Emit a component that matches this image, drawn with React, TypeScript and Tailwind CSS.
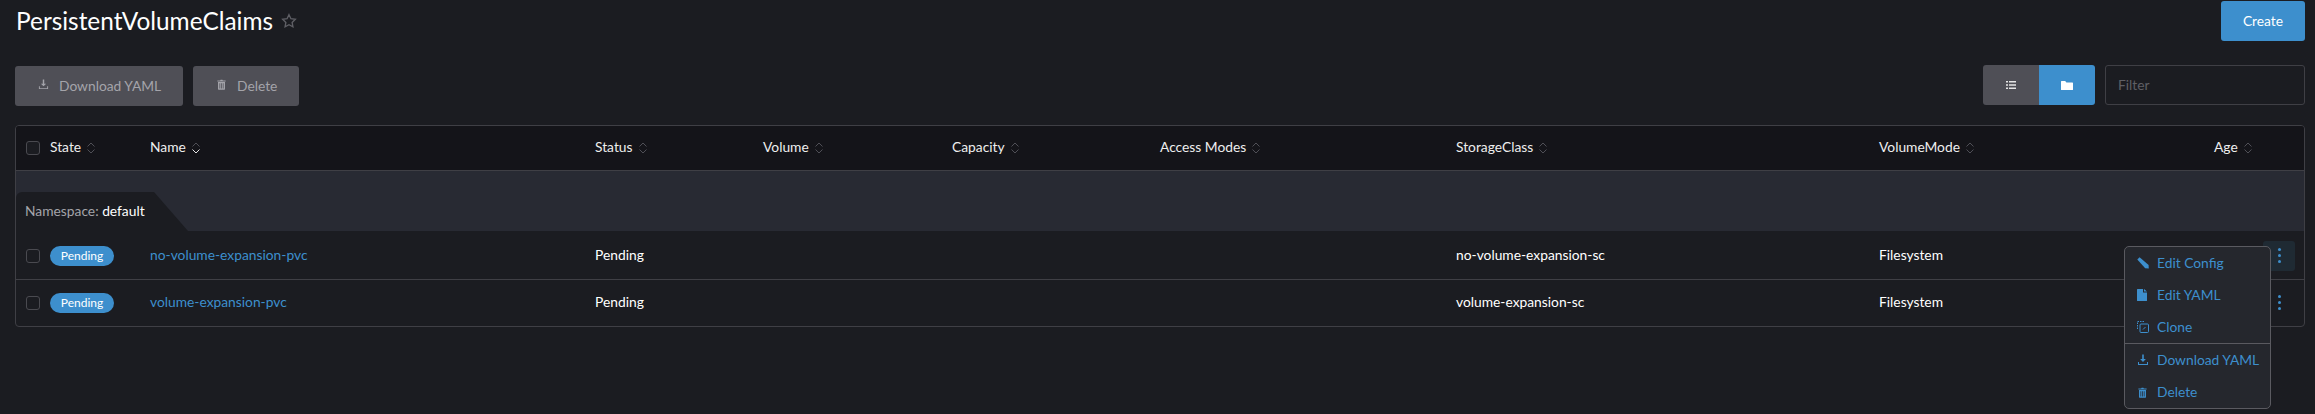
import React from 'react';

const columns = [
  { label: 'State', width: 'w-[100px]' },
  { label: 'Name', width: 'w-[445px]', active: true },
  { label: 'Status', width: 'w-[168px]' },
  { label: 'Volume', width: 'w-[189px]' },
  { label: 'Capacity', width: 'w-[208px]' },
  { label: 'Access Modes', width: 'w-[296px]' },
  { label: 'StorageClass', width: 'w-[423px]' },
  { label: 'VolumeMode', width: 'w-[335px]' },
  { label: 'Age', width: '' },
];

const rows = [
  { name: 'no-volume-expansion-pvc', sc: 'no-volume-expansion-sc', open: true },
  { name: 'volume-expansion-pvc', sc: 'volume-expansion-sc', open: false },
];

const SortIcon = ({ active }: { active?: boolean }) => (
  <svg viewBox="0 0 8 12" className="ml-[6px] h-[12px] w-[8px]" fill="none" strokeWidth="1">
    <path d="M0.5 4.5 L4 1 L7.5 4.5" stroke="#4f4f56" />
    <path d="M0.5 7.5 L4 11 L7.5 7.5" stroke={active ? '#e6e6e6' : '#4f4f56'} />
  </svg>
);

const DownloadIcon = ({ className }: { className: string }) => (
  <svg viewBox="0 0 12 12" className={className} fill="currentColor">
    <path d="M5.2 0.5h1.6v4.6h2.1L6 8 3.1 5.1h2.1z" />
    <path d="M1 8h1v2h8V8h1v3H1z" />
  </svg>
);

const TrashIcon = ({ className }: { className: string }) => (
  <svg viewBox="0 0 12 12" className={className} fill="currentColor">
    <path d="M1.5 1.6h3L5 0.8h2l0.5 0.8h3v1.2h-9z" />
    <path d="M2.2 3.4h7.6V11a0.6 0.6 0 0 1-0.6 0.6H2.8a0.6 0.6 0 0 1-0.6-0.6z M3.8 4.6v5.8h0.8V4.6z M5.6 4.6v5.8h0.8V4.6z M7.4 4.6v5.8h0.8V4.6z" fillRule="evenodd" />
  </svg>
);

const Checkbox = () => (
  <span className="block h-[14px] w-[14px] rounded-[3px] border border-[#4a4a50] bg-[#1b1c21]" />
);

const Kebab = ({ open }: { open: boolean }) => (
  <span className={`flex h-[30px] w-[32px] flex-col items-center justify-center gap-[3px] rounded-[3px] ${open ? 'bg-[#1f2a33]' : ''}`}>
    <i className="h-[3px] w-[3px] rounded-full bg-[#3d8fcd]" />
    <i className="h-[3px] w-[3px] rounded-full bg-[#3d8fcd]" />
    <i className="h-[3px] w-[3px] rounded-full bg-[#3d8fcd]" />
  </span>
);

const MenuItem = ({ icon, label }: { icon: React.ReactNode; label: string }) => (
  <div className="flex h-[32px] items-center pl-[12px] text-[#3d8fcd]">
    <span className="flex w-[20px] items-center">{icon}</span>
    {label}
  </div>
);

const App: React.FC = () => {
  return (
    <div className="relative h-[414px] w-[2315px] overflow-hidden bg-[#1b1c21] pl-[15px] pr-[10px] pt-px font-['Lato',sans-serif] text-[13.8px] text-[#e6e6e6]">
      <div className="flex h-[40px] items-center justify-between">
        <div className="flex items-center text-[24.4px] text-white">
          <span className="pl-px">PersistentVolumeClaims</span>
          <svg viewBox="0 0 24 24" className="ml-[8px] h-[16px] w-[16px]" fill="none" stroke="#5f5f65" strokeWidth="2">
            <path d="M12 2.5l2.9 6.1 6.6.9-4.8 4.6 1.2 6.6-5.9-3.2-5.9 3.2 1.2-6.6-4.8-4.6 6.6-.9z" />
          </svg>
        </div>
        <button className="h-[40px] w-[84px] rounded-[3px] bg-[#3d8fcd] text-white">Create</button>
      </div>

      <div className="mt-[24px] flex items-start justify-between">
        <div className="mt-px flex gap-[10px] text-[#a4a4aa]">
          <button className="flex h-[40px] w-[168px] items-center rounded-[3px] bg-[#4f4f56] pl-[23px]">
            <DownloadIcon className="mb-[3px] mr-[10px] h-[11px] w-[11px]" />
            Download YAML
          </button>
          <button className="flex h-[40px] w-[106px] items-center rounded-[3px] bg-[#4f4f56] pl-[23px]">
            <TrashIcon className="mb-[3px] mr-[10px] h-[11px] w-[11px]" />
            Delete
          </button>
        </div>
        <div className="flex items-center gap-[10px]">
          <div className="flex h-[40px] overflow-hidden rounded-[3px]">
            <span className="flex w-[56px] items-center justify-center bg-[#4f4f56]">
              <svg viewBox="0 0 10 8" className="h-[8px] w-[10px]" fill="#e6e6e6">
                <path d="M0 0h2v1.6H0zM3 0h7v1.6H3zM0 3.2h2v1.6H0zM3 3.2h7v1.6H3zM0 6.4h2V8H0zM3 6.4h7V8H3z" />
              </svg>
            </span>
            <span className="flex w-[56px] items-center justify-center bg-[#3d8fcd]">
              <svg viewBox="0 0 12 9" className="h-[9px] w-[12px]" fill="#ffffff">
                <path d="M0 0.6A0.6 0.6 0 0 1 0.6 0h3.6l1.2 1.4H11.4A0.6 0.6 0 0 1 12 2v6.4a0.6 0.6 0 0 1-0.6 0.6H0.6A0.6 0.6 0 0 1 0 8.4z" />
              </svg>
            </span>
          </div>
          <div className="flex h-[40px] w-[200px] items-center rounded-[3px] border border-[#3f3f45] pl-[12px] text-[#5f5f65]">Filter</div>
        </div>
      </div>

      <div className="mt-[19px] overflow-hidden rounded-[4px] border border-[#3f3f45]">
        <table className="w-full table-fixed border-collapse">
          <colgroup>
            <col className="w-[34px]" />
            {columns.map((c) => (
              <col key={c.label} className={c.width} />
            ))}
          </colgroup>
          <thead>
            <tr className="h-[44px] border-b border-[#3f3f45] bg-[#141419]">
              <th className="pl-[10px] text-left"><Checkbox /></th>
              {columns.map((c) => (
                <th key={c.label} className="p-0 text-left font-normal text-[#eeeeee]">
                  <span className="flex items-center">
                    {c.label}
                    <SortIcon active={c.active} />
                  </span>
                </th>
              ))}
            </tr>
          </thead>
          <tbody>
            <tr className="h-[61px] bg-[#282a33]">
              <td colSpan={10} className="p-0 align-bottom">
                <div className="flex h-[39px] w-[172px] items-center rounded-tl-[6px] bg-[#1b1c21] pl-[9px] [clip-path:polygon(0_0,138px_0,172px_100%,0_100%)]">
                  <span className="text-[#a4a4aa]">Namespace:&nbsp;</span>
                  <span className="text-white">default</span>
                </div>
              </td>
            </tr>
            {rows.map((r) => (
              <tr
                key={r.name}
                className={r.open ? 'h-[48px] border-b border-[#3f3f45] [&>td]:pt-[2px]' : 'h-[47px]'}
              >
                <td className="pl-[10px]"><Checkbox /></td>
                <td className="p-0">
                  <span className="flex h-[20px] w-[64px] items-center justify-center rounded-full bg-[#3d8fcd] text-[12px] text-white">Pending</span>
                </td>
                <td className="p-0 text-[#3d8fcd]">{r.name}</td>
                <td className="p-0 text-white">Pending</td>
                <td className="p-0" />
                <td className="p-0" />
                <td className="p-0" />
                <td className="p-0 text-white">{r.sc}</td>
                <td className="p-0 text-white">Filesystem</td>
                <td className="p-0">
                  <div className="flex justify-end pr-[9px]"><Kebab open={r.open} /></div>
                </td>
              </tr>
            ))}
          </tbody>
        </table>
      </div>

      <div className="absolute left-[2124px] top-[246px] w-[147px] rounded-[5px] border border-[#5a5a60] bg-[#25272d]">
        <MenuItem
          label="Edit Config"
          icon={
            <svg viewBox="0 0 12 12" className="h-[12px] w-[12px]" fill="currentColor">
              <path d="M0.3 2.6L2.6 0.3l9 7.6 0.2 3.7-3.6-.3z" />
            </svg>
          }
        />
        <MenuItem
          label="Edit YAML"
          icon={
            <svg viewBox="0 0 10 12" className="h-[12px] w-[10px]" fill="currentColor">
              <path d="M0 0.6A0.6 0.6 0 0 1 0.6 0H6v3.4h4v8a0.6 0.6 0 0 1-0.6 0.6H0.6A0.6 0.6 0 0 1 0 11.4zM7 0l3 2.5H7z" />
            </svg>
          }
        />
        <MenuItem
          label="Clone"
          icon={
            <svg viewBox="0 0 12 12" className="h-[12px] w-[12px]" fill="none" stroke="currentColor" strokeWidth="1">
              <path d="M0.5 8V0.5H8" strokeDasharray="1.5 1" />
              <rect x="3" y="3" width="8.5" height="8.5" rx="1" />
              <path d="M6 8.5l2.5-2.5" />
            </svg>
          }
        />
        <div className="h-px bg-[#5a5a60]" />
        <MenuItem label="Download YAML" icon={<DownloadIcon className="h-[12px] w-[12px]" />} />
        <MenuItem label="Delete" icon={<TrashIcon className="h-[11px] w-[11px]" />} />
      </div>
    </div>
  );
};

export default App;
